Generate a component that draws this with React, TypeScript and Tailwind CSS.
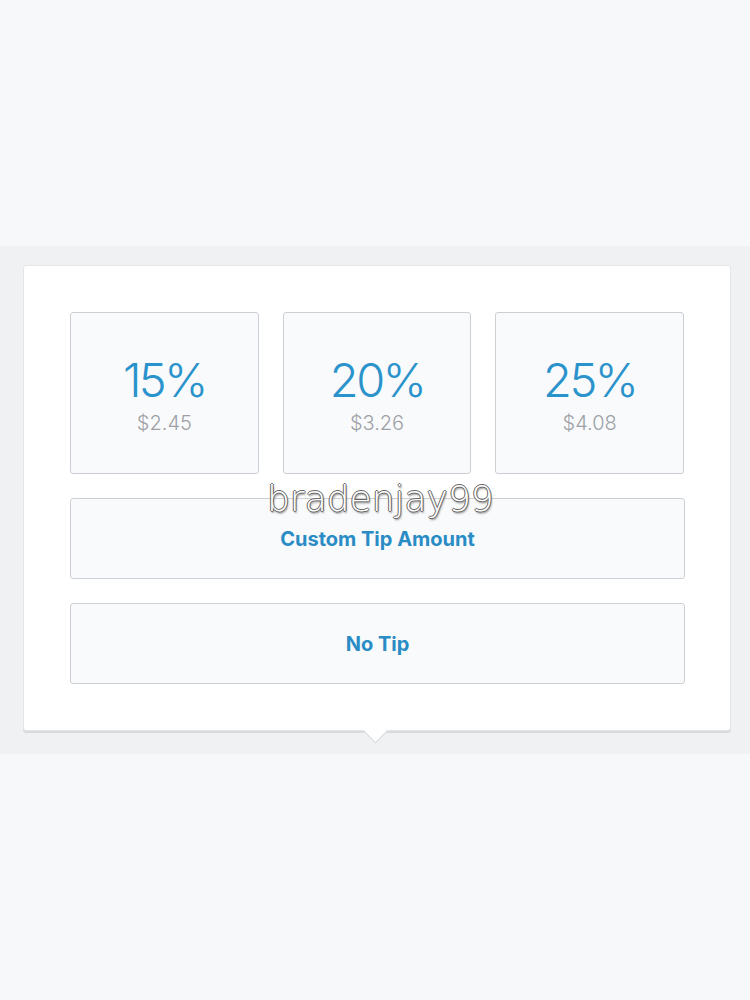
import React from "react";

const tips = [
  { pct: "15%", amt: "$2.45" },
  { pct: "20%", amt: "$3.26" },
  { pct: "25%", amt: "$4.08" },
];

export default function App() {
  return (
    <div
      className="w-[750px] h-[1000px] bg-[#f7f8f9] flex flex-col"
      style={{ fontFamily: "Inter, 'Open Sans', sans-serif" }}
    >
      <div className="h-[246px]" />
      <div className="h-[508px] bg-[#eff1f3] pt-[19px] px-[23px] relative">
        <div className="relative w-[708px] h-[466px] bg-white rounded-[3px] border border-[#e3e5e8] shadow-[0_2px_0_#d8dadd] px-[46px] pt-[46px] flex flex-col gap-[24px]">
          <div className="flex gap-[24px]">
            {tips.map((t) => (
              <div
                key={t.pct}
                className="w-[189px] h-[162px] bg-[#f9fafc] border border-[#ccd0d5] rounded-[3px] flex flex-col items-center justify-center"
              >
                <div className="text-[47px] leading-none text-[#2a93cb] font-light tracking-[-2.5px] mt-[2px]">
                  {t.pct}
                </div>
                <div className="text-[20px] leading-none text-[#9da1a6] font-light mt-[10px]">
                  {t.amt}
                </div>
              </div>
            ))}
          </div>
          <div className="w-[615px] h-[81px] bg-[#f9fafc] border border-[#ccd0d5] rounded-[3px] flex items-center justify-center">
            <span className="text-[20px] font-bold text-[#2a8cc4] mt-[1px]">Custom Tip Amount</span>
          </div>
          <div className="w-[615px] h-[81px] bg-[#f9fafc] border border-[#ccd0d5] rounded-[3px] flex items-center justify-center">
            <span className="text-[20px] font-bold text-[#2a8cc4] mt-[1px]">No Tip</span>
          </div>
          <div className="absolute left-[343px] bottom-[-10px] w-[17px] h-[17px] bg-white border-r border-b border-[#d3d6da] rotate-45" />
        </div>
        <div
          className="absolute left-[267px] top-[235px] text-[36px] leading-none text-white"
          style={{
            fontFamily: "'DejaVu Sans', sans-serif",
            fontWeight: 300,
            letterSpacing: "0px",
            textShadow:
              "-1px 0 #666, 1px 0 #666, 0 -1px #666, 0 1px #666, 1px 2px 2px #888",
          }}
        >
          bradenjay99
        </div>
      </div>
    </div>
  );
}
